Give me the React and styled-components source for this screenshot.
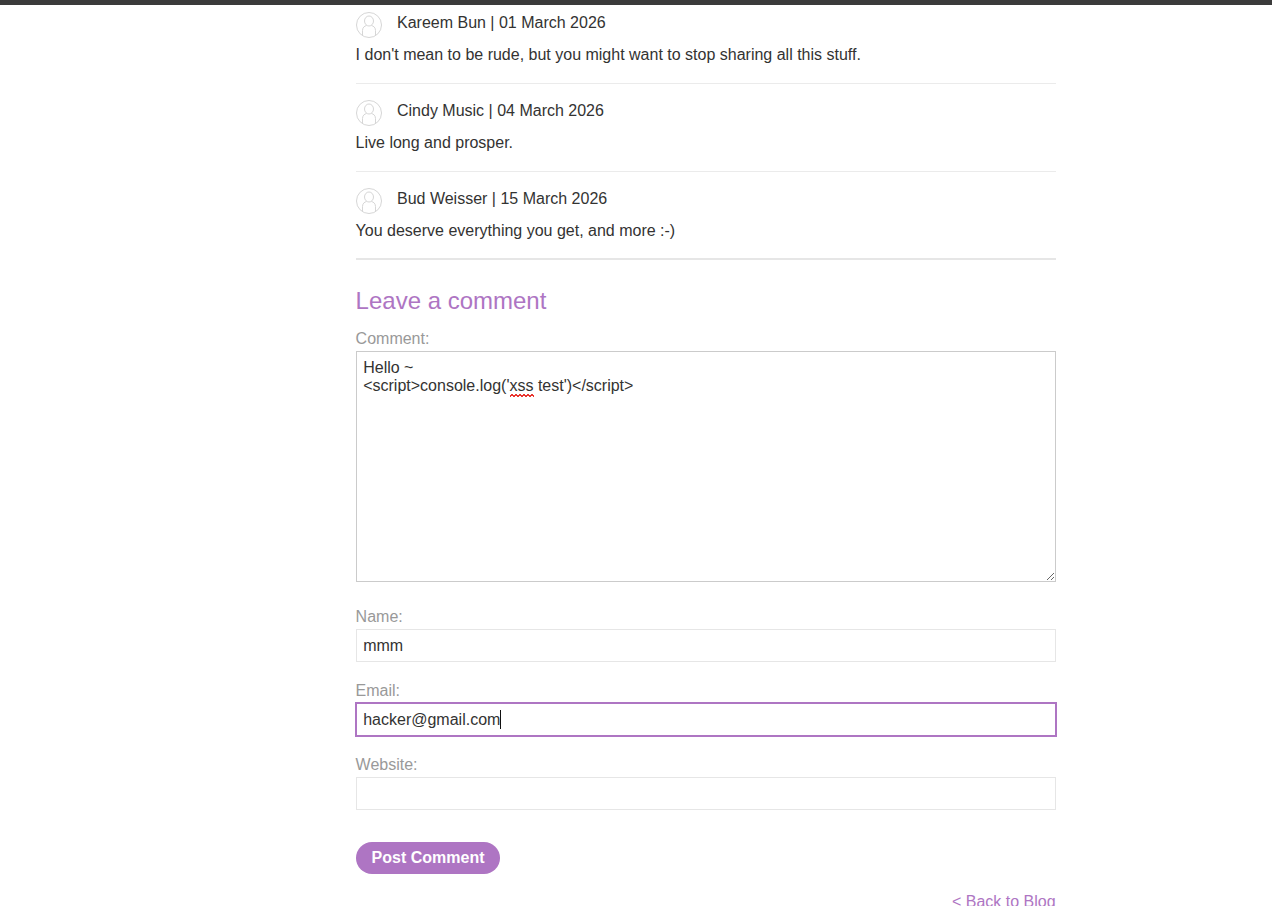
import React from "react";
import styled, { createGlobalStyle } from "styled-components";

const GlobalStyle = createGlobalStyle`
  html, body {
    margin: 0;
    padding: 0;
    height: 906px;
    overflow: hidden;
    background: #fff;
    font-family: "Liberation Sans", Arial, sans-serif;
    font-size: 16px;
    color: #333332;
  }
`;

const TopBar = styled.div`
  height: 5px;
  background: #3b3b3b;
`;

const Column = styled.main`
  width: 700px;
  margin-left: 355.6px;
`;

const Comment = styled.section`
  padding: 16px 0 ${p => (p.$last ? 18 : 19)}px;
  border-bottom: ${p => (p.$last ? "none" : "1px solid #ebebeb")};
  &:first-child {
    padding-top: 7px;
  }
`;

const Meta = styled.div`
  display: flex;
  align-items: flex-start;
  height: 26px;
  line-height: 20px;
`;

const Author = styled.span`
  padding-top: 1px;
`;

const AvatarIcon = styled.svg`
  width: 26px;
  height: 26px;
  margin-right: 15.4px;
  flex: none;
`;

const CommentText = styled.p`
  margin: 7px 0 -1px;
  line-height: 20px;
`;

const Divider = styled.hr`
  margin: 0;
  border: none;
  border-top: 2px solid #e6e6e6;
`;

const Heading = styled.h2`
  margin: 26px 0 0;
  font-size: 24px;
  font-weight: 400;
  line-height: 30px;
  color: #ae75c3;
`;

const Form = styled.form`
  display: flex;
  flex-direction: column;
  margin-top: 13px;
`;

const Label = styled.label`
  display: block;
  line-height: 20px;
  color: #999;
  margin-top: ${p => p.$top || 0}px;
`;

const Field = styled.div`
  position: relative;
  margin-top: 2px;
`;

const Input = styled.input`
  display: block;
  box-sizing: border-box;
  width: 100%;
  height: 33px;
  margin: 0;
  padding: 0 6.6px;
  background: #fff;
  color: #333332;
  font: 16px "Liberation Sans", Arial, sans-serif;
  border: 1px solid ${p => (p.$focus ? "#ae75c3" : "#e6e6e6")};
  outline: ${p => (p.$focus ? "1px solid #ae75c3" : "none")};
`;

const TextArea = styled.textarea`
  display: block;
  box-sizing: border-box;
  width: 100%;
  height: 231px;
  margin: 0;
  padding: 7px 6.6px;
  background: #fff;
  color: #333332;
  font: 16px/18px "Liberation Sans", Arial, sans-serif;
  border: 1px solid #cbcbcb;
  outline: none;
  resize: both;
`;

const Squiggle = styled.svg`
  position: absolute;
  left: 154px;
  top: 42px;
  width: 24px;
  height: 5px;
`;

const Caret = styled.span`
  position: absolute;
  left: 144px;
  top: 7px;
  width: 1px;
  height: 19px;
  background: #111;
`;

const PostButton = styled.button`
  align-self: flex-start;
  margin-top: 32px;
  height: 32px;
  padding: 0 15px 0 16px;
  border: none;
  border-radius: 16px;
  background: #ae75c3;
  color: #fff;
  font: 700 16px "Liberation Sans", Arial, sans-serif;
`;

const BackRow = styled.div`
  margin-top: 18px;
  line-height: 20px;
  text-align: right;
`;

const BackLink = styled.a`
  color: #ae75c3;
  text-decoration: none;
`;

const comments = [
  { who: "Kareem Bun | 01 March 2026", text: "I don't mean to be rude, but you might want to stop sharing all this stuff." },
  { who: "Cindy Music | 04 March 2026", text: "Live long and prosper." },
  { who: "Bud Weisser | 15 March 2026", text: "You deserve everything you get, and more :-)" }
];

const Avatar = () => (
  <AvatarIcon viewBox="0 0 26 26" fill="none" stroke="#d6d6d6" strokeWidth="1">
    <circle cx="13" cy="13" r="12.5" />
    <ellipse cx="13" cy="9" rx="4.5" ry="5" />
    <path d="M6.500 24V18.500C6.500 15.500 8.500 14 10.500 13.500M19.500 24V18.500C19.500 15.500 17.500 14 15.500 13.500" />
  </AvatarIcon>
);

const commentValue = "Hello ~\n<script>console.log('xss test')</script>";

export default function App() {
  return (
    <>
      <GlobalStyle />
      <TopBar />
      <Column>
        {comments.map((c, i) => (
          <Comment key={c.who} $last={i === comments.length - 1}>
            <Meta><Avatar /><Author>{c.who}</Author></Meta>
            <CommentText>{c.text}</CommentText>
          </Comment>
        ))}
        <Divider />
        <Heading>Leave a comment</Heading>
        <Form>
          <Label>Comment:</Label>
          <Field>
            <TextArea readOnly spellCheck={false} value={commentValue} />
            <Squiggle viewBox="0 0 24 5" fill="none" stroke="#e8352f" strokeWidth="1" shapeRendering="crispEdges">
              <path d="M0 3.500 2 1.500 4 3.500 6 1.500 8 3.500 10 1.500 12 3.500 14 1.500 16 3.500 18 1.500 20 3.500 22 1.500 24 3.500" />
            </Squiggle>
          </Field>
          <Label $top={25}>Name:</Label>
          <Field><Input readOnly value="mmm" /></Field>
          <Label $top={19}>Email:</Label>
          <Field>
            <Input $focus readOnly value="hacker@gmail.com" />
            <Caret />
          </Field>
          <Label $top={19}>Website:</Label>
          <Field><Input readOnly value="" /></Field>
          <PostButton type="button">Post Comment</PostButton>
        </Form>
        <BackRow><BackLink href="#">&lt; Back to Blog</BackLink></BackRow>
      </Column>
    </>
  );
}
